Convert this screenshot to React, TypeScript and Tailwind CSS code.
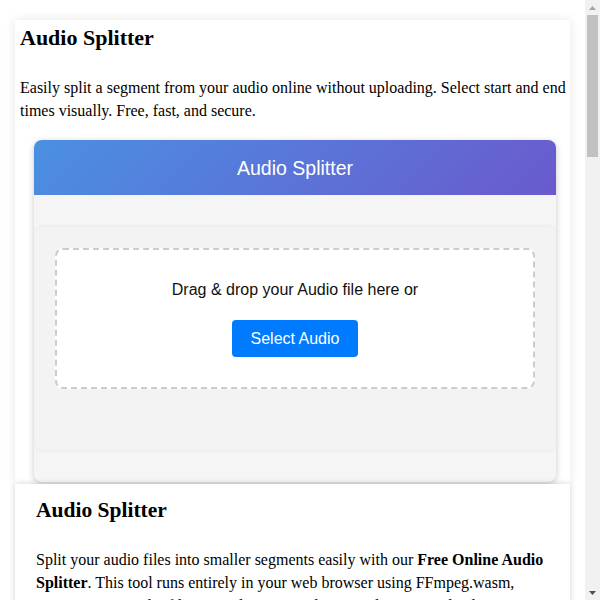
import React from 'react';

const serif = { fontFamily: '"Liberation Serif", "Times New Roman", serif' };
const sans = { fontFamily: '"Liberation Sans", Arial, sans-serif' };

function Dropzone() {
  return (
    <div className="border-2 border-dashed border-[#cccccc] rounded-lg bg-white p-[30px] flex flex-col items-center">
      <p className="text-[16px] leading-[20px] text-[#111]">Drag &amp; drop your Audio file here or</p>
      <button className="mt-5 bg-[#007bff] text-white text-[16px] leading-[19px] px-[19px] py-[9px] rounded-[4px]">
        Select Audio
      </button>
    </div>
  );
}

function SplitterTool() {
  return (
    <div className="w-[522px] ml-[14px] mt-[18px] rounded-lg overflow-hidden bg-[#f5f5f5] shadow-[0_2px_7px_rgba(0,0,0,0.22)]" style={sans}>
      <div className="h-[55px] flex items-center justify-center bg-[linear-gradient(135deg,#4a90e2,#6a5acd)]">
        <h2 className="text-white text-[19.5px] leading-[24px] font-normal">Audio Splitter</h2>
      </div>
      <div className="py-8">
        <div className="bg-[#f3f3f3] rounded-lg shadow-[0_0_4px_rgba(0,0,0,0.07)] px-[21px] pt-[21px] pb-[61px]">
          <Dropzone />
        </div>
      </div>
    </div>
  );
}

// classic page scrollbar as seen in the screenshot
function Scrollbar() {
  return (
    <div className="fixed top-0 right-0 w-[15px] h-screen bg-[#f1f1f1] flex flex-col">
      <div className="h-[15px] flex items-center justify-center">
        <svg width="7" height="4" viewBox="0 0 7 4"><path d="M3.5 0L7 4H0z" fill="#a3a3a3" /></svg>
      </div>
      <div className="mx-[2px] h-[142px] bg-[#c1c1c1]" />
      <div className="flex-1" />
      <div className="h-[15px] flex items-center justify-center">
        <svg width="7" height="4" viewBox="0 0 7 4"><path d="M0 0h7L3.5 4z" fill="#505050" /></svg>
      </div>
    </div>
  );
}

export default function App() {
  return (
    <div className="bg-white text-black w-[585px] pb-5" style={serif}>
      <div className="mx-[15px] mt-[20px] bg-white shadow-[0_0_10px_rgba(0,0,0,0.1)] pt-[5px] pl-[5px] pr-[2px] pb-[2px]">
        <h1 className="text-[22px] leading-[25px] font-bold">Audio Splitter</h1>
        <p className="mt-[26px] text-[16px] leading-[23px]">
          Easily split a segment from your audio online without uploading. Select start and end times visually. Free, fast, and secure.
        </p>
        <SplitterTool />
      </div>

      <section className="mx-[15px] bg-white shadow-[0_0_6px_rgba(0,0,0,0.18)] px-[21px] pt-[14px] pb-8 min-h-[1904px]">
        <h2 className="text-[21.5px] leading-[25px] font-bold">Audio Splitter</h2>
        <p className="mt-[25px] text-[16px] leading-[23px]">
          Split your audio files into smaller segments easily with our <strong>Free Online Audio Splitter</strong>. This tool runs entirely in your web browser using FFmpeg.wasm, ensuring your audio files never leave your device and stay completely private while being processed.
        </p>
        <h3 className="mt-6 text-[18px] leading-[24px] font-bold">How to Use</h3>
        <ol className="mt-3 list-decimal pl-8 text-[16px] leading-[23px]">
          <li>Drag and drop your audio file or click Select Audio.</li>
          <li>Choose the start and end times on the waveform.</li>
          <li>Click Split and download your new audio segment.</li>
        </ol>
        <h3 className="mt-6 text-[18px] leading-[24px] font-bold">Features</h3>
        <ul className="mt-3 list-disc pl-8 text-[16px] leading-[23px]">
          <li>No upload required, all processing happens locally.</li>
          <li>Supports MP3, WAV, OGG, M4A and more.</li>
          <li>Visual selection of start and end times.</li>
          <li>Completely free with no sign-up.</li>
        </ul>
      </section>
      <Scrollbar />
    </div>
  );
}
